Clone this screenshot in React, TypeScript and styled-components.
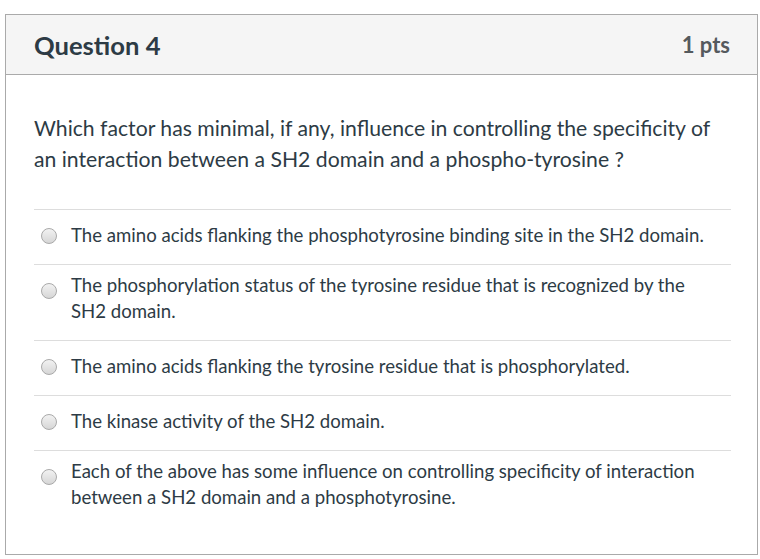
import React from "react";
import styled, {createGlobalStyle} from "styled-components";

const GlobalStyle = createGlobalStyle`
  body {
    margin: 0;
    background: #ffffff;
    font-family: Lato, "Open Sans", "Liberation Sans", sans-serif;
    color: #2d3b45;
  }
`;

const Card = styled.div`
  margin: 14px 2px 0 5px;
  border: 1px solid #aaaaaa;
  background: #ffffff;
`;

const Header = styled.div`
  height: 59px;
  display: flex;
  align-items: center;
  justify-content: space-between;
  padding: 0 27px 0 28px;
  background: #f5f5f5;
  border-bottom: 1px solid #aaaaaa;
`;

const Title = styled.h2`
  margin: 0;
  font-size: 25.6px;
  font-weight: 700;
  color: #2d3b45;
`;

const Points = styled.div`
  font-size: 22px;
  font-weight: 700;
  color: #555a5e;
`;

const Body = styled.div`
  padding: 38px 26px 28px 28px;
`;

const Prompt = styled.p`
  margin: 0 0 34px;
  font-size: 21.2px;
  line-height: 31px;
`;

const Answers = styled.div`
  display: flex;
  flex-direction: column;
`;

const Answer = styled.label`
  display: flex;
  align-items: flex-start;
  gap: 14px;
  padding: 7px 10px 16px 7px;
  border-top: 1px solid #dddddd;
  font-size: 18.6px;
  line-height: 26px;
  cursor: pointer;
`;

const Radio = styled.span`
  flex: none;
  width: 16px;
  height: 16px;
  margin-top: 11px;
  box-sizing: border-box;
  border-radius: 50%;
  border: 1px solid #a9a9a9;
  background: linear-gradient(#f2f2f2, #d6d6d6);
`;

const AnswerText = styled.span`
  flex: 1;
  min-height: 31px;
  display: flex;
  align-items: flex-end;
`;

const answers = [
  "The amino acids flanking the phosphotyrosine binding site in the SH2 domain.",
  "The phosphorylation status of the tyrosine residue that is recognized by the SH2 domain.",
  "The amino acids flanking the tyrosine residue that is phosphorylated.",
  "The kinase activity of the SH2 domain.",
  "Each of the above has some influence on controlling specificity of interaction between a SH2 domain and a phosphotyrosine.",
];

const App: React.FC = () => {
  return (
    <>
      <GlobalStyle/>
      <Card>
        <Header>
          <Title>Question 4</Title>
          <Points>1 pts</Points>
        </Header>
        <Body>
          <Prompt>
            Which factor has minimal, if any, influence in controlling the specificity of an interaction
            between a SH2 domain and a phospho-tyrosine ?
          </Prompt>
          <Answers>
            {answers.map((a) => (
              <Answer key={a}>
                <Radio/>
                <AnswerText>
                  <span>{a}</span>
                </AnswerText>
              </Answer>
            ))}
          </Answers>
        </Body>
      </Card>
    </>
  );
};

export default App;
